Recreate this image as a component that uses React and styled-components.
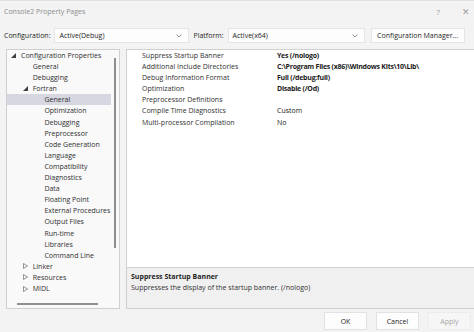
import React from 'react';
import styled, { createGlobalStyle } from 'styled-components';

const GlobalStyle = createGlobalStyle`
  html, body {
    margin: 0;
    padding: 0;
    background: #f3f3f3;
  }
  body {
    font-family: "Open Sans", "Noto Sans", "Liberation Sans", sans-serif;
    font-size: 7px;
    color: #1e1e1e;
  }
`;

const treeItems = [
  { label: 'Configuration Properties', level: 0, arrow: 'open' },
  { label: 'General', level: 1 },
  { label: 'Debugging', level: 1 },
  { label: 'Fortran', level: 1, arrow: 'open' },
  { label: 'General', level: 2, selected: true },
  { label: 'Optimization', level: 2 },
  { label: 'Debugging', level: 2 },
  { label: 'Preprocessor', level: 2 },
  { label: 'Code Generation', level: 2 },
  { label: 'Language', level: 2 },
  { label: 'Compatibility', level: 2 },
  { label: 'Diagnostics', level: 2 },
  { label: 'Data', level: 2 },
  { label: 'Floating Point', level: 2 },
  { label: 'External Procedures', level: 2 },
  { label: 'Output Files', level: 2 },
  { label: 'Run-time', level: 2 },
  { label: 'Libraries', level: 2 },
  { label: 'Command Line', level: 2 },
  { label: 'Linker', level: 1, arrow: 'closed' },
  { label: 'Resources', level: 1, arrow: 'closed' },
  { label: 'MIDL', level: 1, arrow: 'closed' }
];

const properties = [
  { name: 'Suppress Startup Banner', value: 'Yes (/nologo)', bold: true },
  { name: 'Additional Include Directories', value: 'C:\\Program Files (x86)\\Windows Kits\\10\\Lib\\', bold: true },
  { name: 'Debug Information Format', value: 'Full (/debug:full)', bold: true },
  { name: 'Optimization', value: 'Disable (/Od)', bold: true },
  { name: 'Preprocessor Definitions', value: '' },
  { name: 'Compile Time Diagnostics', value: 'Custom' },
  { name: 'Multi-processor Compilation', value: 'No' }
];

function Arrow({ kind }) {
  if (kind === 'open') {
    return (
      <svg width="5" height="5" viewBox="0 0 5 5">
        <polygon points="5,0 5,5 0,5" fill="#404040" />
      </svg>
    );
  }
  return (
    <svg width="5" height="6" viewBox="0 0 5 6">
      <polygon points="0.5,0.5 4.5,3 0.5,5.5" fill="none" stroke="#7a7a7a" strokeWidth="0.8" />
    </svg>
  );
}

function Chevron() {
  return (
    <svg width="6" height="4" viewBox="0 0 6 4">
      <polyline points="0.5,0.5 3,3 5.5,0.5" fill="none" stroke="#707070" strokeWidth="0.8" />
    </svg>
  );
}

function App() {
  return (
    <Window>
      <GlobalStyle />
      <TitleBar>
        <Title>Console2 Property Pages</Title>
        <TitleButtons>
          <TitleGlyph>?</TitleGlyph>
          <TitleGlyph $big>✕</TitleGlyph>
        </TitleButtons>
      </TitleBar>

      <ConfigRow>
        <Label>Configuration:</Label>
        <Combo $width={135}>
          <span>Active(Debug)</span>
          <Chevron />
        </Combo>
        <Label>Platform:</Label>
        <Combo $width={137}>
          <span>Active(x64)</span>
          <Chevron />
        </Combo>
        <ManagerButton>Configuration Manager...</ManagerButton>
      </ConfigRow>

      <Main>
        <Tree>
          <TreeBody>
            <TreeList>
              {treeItems.map((item, i) => (
                <TreeRow key={i} $selected={item.selected}>
                  <ArrowSlot $level={item.level}>
                    {item.arrow && <Arrow kind={item.arrow} />}
                  </ArrowSlot>
                  {item.label}
                </TreeRow>
              ))}
            </TreeList>
            <VTrack>
              <VThumb />
            </VTrack>
          </TreeBody>
          <HTrack>
            <HThumb />
          </HTrack>
        </Tree>

        <RightColumn>
          <Grid>
            {properties.map((p) => (
              <PropRow key={p.name}>
                <PropName>{p.name}</PropName>
                <PropValue $bold={p.bold}>{p.value}</PropValue>
              </PropRow>
            ))}
          </Grid>
          <Description>
            <DescTitle>Suppress Startup Banner</DescTitle>
            <DescText>Suppresses the display of the startup banner. (/nologo)</DescText>
          </Description>
        </RightColumn>
      </Main>

      <ButtonRow>
        <DialogButton>OK</DialogButton>
        <DialogButton>Cancel</DialogButton>
        <DialogButton $disabled>Apply</DialogButton>
      </ButtonRow>
    </Window>
  );
}

const Window = styled.div`
  width: 474px;
  height: 332px;
  overflow: hidden;
  display: flex;
  flex-direction: column;
  background: #f3f3f3;
`;

const TitleBar = styled.div`
  height: 22px;
  display: flex;
  align-items: center;
  justify-content: space-between;
  padding: 0 4px;
  border-top: 1px solid #e2e2e2;
  box-sizing: border-box;
`;

const Title = styled.span`
  color: #8c8c8c;
  font-size: 7px;
`;

const TitleButtons = styled.div`
  display: flex;
  align-items: center;
  gap: 22px;
  padding-right: 0;
`;

const TitleGlyph = styled.span`
  color: #9a9a9a;
  font-size: ${(p) => (p.$big ? '9px' : '8px')};
`;

const ConfigRow = styled.div`
  height: 15px;
  margin-top: 6px;
  display: flex;
  align-items: center;
  padding-left: 4px;
`;

const Label = styled.span`
  margin-right: 4px;
  white-space: nowrap;
`;

const Combo = styled.div`
  width: ${(p) => p.$width}px;
  height: 15px;
  box-sizing: border-box;
  background: #fdfdfd;
  border: 1px solid #e4e4e4;
  display: flex;
  align-items: center;
  justify-content: space-between;
  padding: 0 6px 0 4px;
  margin-right: 4px;
`;

const ManagerButton = styled.div`
  width: 94px;
  height: 15px;
  box-sizing: border-box;
  margin-left: 2px;
  background: #fdfdfd;
  border: 1px solid #e4e4e4;
  display: flex;
  align-items: center;
  justify-content: center;
  white-space: nowrap;
`;

const Main = styled.div`
  display: flex;
  gap: 6px;
  margin-top: 6px;
  padding-left: 6px;
  height: 260px;
`;

const Tree = styled.div`
  width: 114px;
  flex-shrink: 0;
  box-sizing: border-box;
  border: 1px solid #cfcfcf;
  background: #f9f9f9;
  display: flex;
  flex-direction: column;
`;

const TreeBody = styled.div`
  flex: 1;
  display: flex;
  min-height: 0;
`;

const TreeList = styled.div`
  flex: 1;
  overflow: hidden;
`;

const TreeRow = styled.div`
  height: 11.1px;
  line-height: 11.1px;
  display: flex;
  align-items: center;
  white-space: nowrap;
  color: #303030;
  background: ${(p) => (p.$selected ? '#d6d7e0' : 'transparent')};
`;

const ArrowSlot = styled.span`
  display: flex;
  align-items: center;
  justify-content: flex-start;
  width: 10px;
  margin-left: ${(p) => 4 + p.$level * 11.7}px;
`;

const VTrack = styled.div`
  width: 8px;
  padding: 8px 0 51px;
  display: flex;
  justify-content: center;
`;

const VThumb = styled.div`
  width: 2px;
  background: #8f8f8f;
`;

const HTrack = styled.div`
  height: 9px;
  padding: 0 21px 0 10px;
  display: flex;
  align-items: center;
`;

const HThumb = styled.div`
  flex: 1;
  height: 2px;
  background: #8f8f8f;
`;

const RightColumn = styled.div`
  width: 360px;
  flex-shrink: 0;
  display: flex;
  flex-direction: column;
`;

const Grid = styled.div`
  height: 219px;
  box-sizing: border-box;
  border: 1px solid #cfcfcf;
  background: #ffffff;
`;

const PropRow = styled.div`
  height: 11.1px;
  line-height: 11.1px;
  display: grid;
  grid-template-columns: 135px 1fr;
  padding-left: 15px;
  white-space: nowrap;
`;

const PropName = styled.span`
  color: #303030;
`;

const PropValue = styled.span`
  font-weight: ${(p) => (p.$bold ? 700 : 400)};
  letter-spacing: ${(p) => (p.$bold ? '-0.25px' : '0')};
  color: #1a1a1a;
`;

const Description = styled.div`
  height: 41px;
  box-sizing: border-box;
  border: 1px solid #cfcfcf;
  border-top: none;
  background: #f0f0f0;
  padding: 3px 4px;
  line-height: 11px;
`;

const DescTitle = styled.div`
  font-weight: 700;
`;

const DescText = styled.div`
  color: #303030;
`;

const ButtonRow = styled.div`
  display: flex;
  justify-content: flex-end;
  gap: 9px;
  margin-top: 3px;
  padding-right: 3px;
`;

const DialogButton = styled.div`
  width: 43px;
  height: 18px;
  box-sizing: border-box;
  display: flex;
  align-items: center;
  justify-content: center;
  background: ${(p) => (p.$disabled ? '#f6f6f6' : '#fdfdfd')};
  border: 1px solid ${(p) => (p.$disabled ? '#ececec' : '#e2e2e2')};
  color: ${(p) => (p.$disabled ? '#a6a6a6' : '#1e1e1e')};
`;

export default App;
